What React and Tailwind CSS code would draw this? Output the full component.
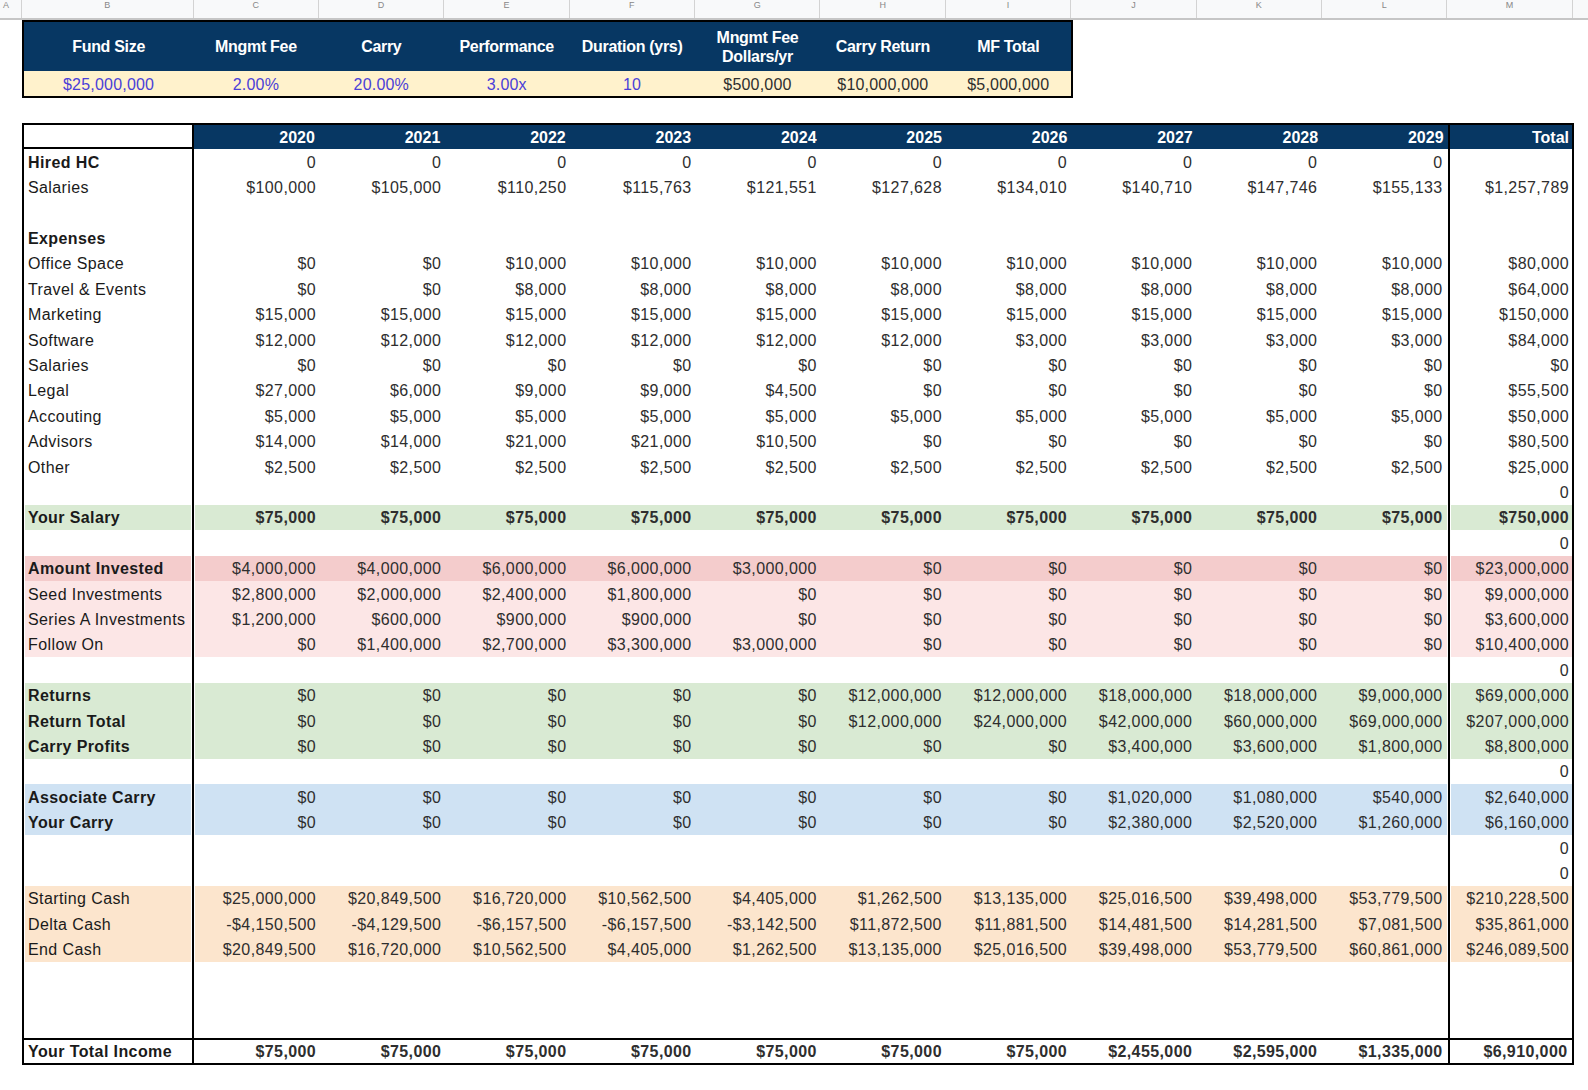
import React from "react";

const letters = ["B", "C", "D", "E", "F", "G", "H", "I", "J", "K", "L", "M"];

const bands = {
  none: "",
  green: "bg-[#d9ead3]",
  red: "bg-[#f4cccc]",
  pink: "bg-[#fce6e6]",
  blue: "bg-[#cfe2f3]",
  peach: "bg-[#fce5cd]",
};

const z5 = ["$0", "$0", "$0", "$0", "$0"];

const rows = [
  { label: "Hired HC", bold: true, vals: ["0", "0", "0", "0", "0", "0", "0", "0", "0", "0"], total: "" },
  { label: "Salaries", vals: ["$100,000", "$105,000", "$110,250", "$115,763", "$121,551", "$127,628", "$134,010", "$140,710", "$147,746", "$155,133"], total: "$1,257,789" },
  { blank: true, total: "" },
  { label: "Expenses", bold: true, vals: [], total: "" },
  { label: "Office Space", vals: ["$0", "$0", "$10,000", "$10,000", "$10,000", "$10,000", "$10,000", "$10,000", "$10,000", "$10,000"], total: "$80,000" },
  { label: "Travel & Events", vals: ["$0", "$0", "$8,000", "$8,000", "$8,000", "$8,000", "$8,000", "$8,000", "$8,000", "$8,000"], total: "$64,000" },
  { label: "Marketing", vals: Array(10).fill("$15,000"), total: "$150,000" },
  { label: "Software", vals: ["$12,000", "$12,000", "$12,000", "$12,000", "$12,000", "$12,000", "$3,000", "$3,000", "$3,000", "$3,000"], total: "$84,000" },
  { label: "Salaries", vals: Array(10).fill("$0"), total: "$0" },
  { label: "Legal", vals: ["$27,000", "$6,000", "$9,000", "$9,000", "$4,500", ...z5], total: "$55,500" },
  { label: "Accouting", vals: Array(10).fill("$5,000"), total: "$50,000" },
  { label: "Advisors", vals: ["$14,000", "$14,000", "$21,000", "$21,000", "$10,500", ...z5], total: "$80,500" },
  { label: "Other", vals: Array(10).fill("$2,500"), total: "$25,000" },
  { blank: true, total: "0" },
  { label: "Your Salary", bold: true, boldVals: true, band: "green", vals: Array(10).fill("$75,000"), total: "$750,000" },
  { blank: true, total: "0" },
  { label: "Amount Invested", bold: true, band: "red", vals: ["$4,000,000", "$4,000,000", "$6,000,000", "$6,000,000", "$3,000,000", ...z5], total: "$23,000,000" },
  { label: "Seed Investments", band: "pink", vals: ["$2,800,000", "$2,000,000", "$2,400,000", "$1,800,000", "$0", ...z5], total: "$9,000,000" },
  { label: "Series A Investments", band: "pink", vals: ["$1,200,000", "$600,000", "$900,000", "$900,000", "$0", ...z5], total: "$3,600,000" },
  { label: "Follow On", band: "pink", vals: ["$0", "$1,400,000", "$2,700,000", "$3,300,000", "$3,000,000", ...z5], total: "$10,400,000" },
  { blank: true, total: "0" },
  { label: "Returns", bold: true, band: "green", vals: [...z5, "$12,000,000", "$12,000,000", "$18,000,000", "$18,000,000", "$9,000,000"], total: "$69,000,000" },
  { label: "Return Total", bold: true, band: "green", vals: [...z5, "$12,000,000", "$24,000,000", "$42,000,000", "$60,000,000", "$69,000,000"], total: "$207,000,000" },
  { label: "Carry Profits", bold: true, band: "green", vals: [...z5, "$0", "$0", "$3,400,000", "$3,600,000", "$1,800,000"], total: "$8,800,000" },
  { blank: true, total: "0" },
  { label: "Associate Carry", bold: true, band: "blue", vals: [...z5, "$0", "$0", "$1,020,000", "$1,080,000", "$540,000"], total: "$2,640,000" },
  { label: "Your Carry", bold: true, band: "blue", vals: [...z5, "$0", "$0", "$2,380,000", "$2,520,000", "$1,260,000"], total: "$6,160,000" },
  { blank: true, total: "0" },
  { blank: true, total: "0" },
  { label: "Starting Cash", band: "peach", vals: ["$25,000,000", "$20,849,500", "$16,720,000", "$10,562,500", "$4,405,000", "$1,262,500", "$13,135,000", "$25,016,500", "$39,498,000", "$53,779,500"], total: "$210,228,500" },
  { label: "Delta Cash", band: "peach", vals: ["-$4,150,500", "-$4,129,500", "-$6,157,500", "-$6,157,500", "-$3,142,500", "$11,872,500", "$11,881,500", "$14,481,500", "$14,281,500", "$7,081,500"], total: "$35,861,000" },
  { label: "End Cash", band: "peach", vals: ["$20,849,500", "$16,720,000", "$10,562,500", "$4,405,000", "$1,262,500", "$13,135,000", "$25,016,500", "$39,498,000", "$53,779,500", "$60,861,000"], total: "$246,089,500" },
  { blank: true, total: "" },
  { blank: true, total: "" },
  { blank: true, total: "" },
];

const inputs = [
  { head: "Fund Size", val: "$25,000,000", blue: true },
  { head: "Mngmt Fee", val: "2.00%", blue: true },
  { head: "Carry", val: "20.00%", blue: true },
  { head: "Performance", val: "3.00x", blue: true },
  { head: "Duration (yrs)", val: "10", blue: true },
  { head: ["Mngmt Fee", "Dollars/yr"], val: "$500,000" },
  { head: "Carry Return", val: "$10,000,000" },
  { head: "MF Total", val: "$5,000,000" },
];

const income = ["$75,000", "$75,000", "$75,000", "$75,000", "$75,000", "$75,000", "$75,000", "$2,455,000", "$2,595,000", "$1,335,000"];

function Row({ row }) {
  const bg = bands[row.band || "none"];
  const vals = row.blank ? [] : row.vals;
  return (
    <div className="flex h-[25.42px]">
      <div className="w-[169.5px] border-r-2 border-black flex">
        <div className={`flex-1 ml-px mr-[1px] flex items-center pl-[3px] pt-[2px] text-[#1a1a1a] whitespace-nowrap ${row.bold ? "font-bold" : ""} ${bg}`}>
          {row.label}
        </div>
      </div>
      <div className="w-[1254px] flex pl-[1.5px] pr-px">
        <div className={`flex-1 flex ${bg}`}>
          {Array.from({ length: 10 }).map((_, i) => (
            <div key={i} className={`flex-1 flex items-center justify-end pr-[4px] pt-[2px] text-[#2e2e2e] whitespace-nowrap ${row.boldVals ? "font-bold" : ""}`}>
              {vals[i] || ""}
            </div>
          ))}
        </div>
      </div>
      <div className="w-[124.5px] border-l-2 border-black flex">
        <div className={`flex-1 ml-[1.5px] flex items-center justify-end pr-[3px] pt-[2px] text-[#2e2e2e] whitespace-nowrap ${row.boldVals ? "font-bold" : ""} ${bg}`}>
          {row.total}
        </div>
      </div>
    </div>
  );
}

export default function App() {
  return (
    <div className="w-[1588px] h-[1090px] bg-white overflow-hidden font-['Liberation_Sans',Arial,sans-serif] text-[16px]">
      {/* column letters */}
      <div className="flex h-[20px] border-b-2 border-[#c6c6c6] bg-[#f8f9fa] overflow-hidden text-[9px] text-[#888] leading-none">
        <div className="w-[22px] border-r border-[#d3d3d3] pl-[3px] pt-px">A</div>
        <div className="w-[171.5px] border-r border-[#d3d3d3] text-center pt-px">B</div>
        {letters.slice(1).map((l) => (
          <div key={l} className="w-[125.4px] border-r border-[#d3d3d3] text-center pt-px">
            {l}
          </div>
        ))}
        <div className="flex-1" />
      </div>

      {/* inputs table */}
      <div className="ml-[22px] w-[1051px] border-2 border-black">
        <div className="flex h-[49px] bg-[#073763] text-white font-bold tracking-[-0.3px]">
          {inputs.map((c, i) => (
            <div key={i} className={`${i === 0 ? "w-[169.5px]" : "w-[125.6px]"} flex flex-col items-center justify-center text-center leading-[19px]`}>
              {Array.isArray(c.head) ? (
                <>
                  <span>{c.head[0]}</span>
                  <span>{c.head[1]}</span>
                </>
              ) : (
                <span>{c.head}</span>
              )}
            </div>
          ))}
        </div>
        <div className="flex h-[25px] bg-[#fff2cc] tracking-[0.2px]">
          {inputs.map((c, i) => (
            <div key={i} className={`${i === 0 ? "w-[169.5px]" : "w-[125.6px]"} flex items-center justify-center pt-[2px] ${c.blue ? "text-[#4a40d8]" : "text-[#2e2e2e]"}`}>
              {c.val}
            </div>
          ))}
        </div>
      </div>

      {/* main model */}
      <div className="ml-[22px] mt-[25px] w-[1552px] border-2 border-black tracking-[0.4px]">
        <div className="flex h-[24px] font-bold text-white tracking-normal">
          <div className="w-[169.5px] border-r-2 border-b-2 border-black bg-white" />
          <div className="w-[1254px] flex bg-[#073763]">
            {Array.from({ length: 10 }).map((_, i) => (
              <div key={i} className="flex-1 flex items-center justify-end pr-[4px] pt-[1px]">
                {2020 + i}
              </div>
            ))}
          </div>
          <div className="w-[124.5px] border-l-2 border-black bg-[#073763] flex items-center justify-end pr-[3px] pt-[1px]">
            Total
          </div>
        </div>
        {rows.map((r, i) => (
          <Row key={i} row={r} />
        ))}
        <div className="flex h-[24.3px] border-t-2 border-black font-bold">
          <div className="w-[169.5px] border-r-2 border-black flex items-center pl-[4px] pt-[1px] text-[#1a1a1a] whitespace-nowrap">
            Your Total Income
          </div>
          <div className="w-[1254px] flex pl-[1.5px] pr-px">
            {income.map((v, i) => (
              <div key={i} className="flex-1 flex items-center justify-end pr-[4px] pt-[1px] text-[#2e2e2e]">
                {v}
              </div>
            ))}
          </div>
          <div className="w-[124.5px] border-l-2 border-black flex items-center justify-end pr-[4.5px] pt-[1px] text-[#2e2e2e]">
            $6,910,000
          </div>
        </div>
      </div>
    </div>
  );
}
